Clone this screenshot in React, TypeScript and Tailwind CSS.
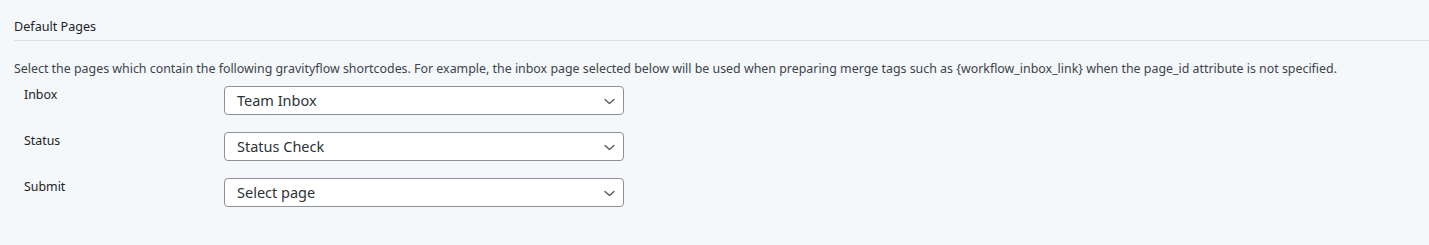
const ROWS = [
  { label: "Inbox", value: "Team Inbox" },
  { label: "Status", value: "Status Check" },
  { label: "Submit", value: "Select page" },
];

function PageSelect({ value }: { value: string }) {
  return (
    <div className="relative w-[400px] h-[29px] rounded-[4px] border border-[#8c8f94] bg-white flex items-center pl-[12px] text-[14.5px] text-[#2c3338] [font-family:'Noto_Sans',sans-serif]">
      <span>{value}</span>
      <svg
        className="absolute right-[8px] top-[11px] text-[#50575e]"
        width="11"
        height="7"
        viewBox="0 0 11 7"
        fill="none"
      >
        <path d="M1 1.5l4.5 4L10 1.5" stroke="currentColor" strokeWidth="1.3" strokeLinecap="round" strokeLinejoin="round" />
      </svg>
    </div>
  );
}

export default function App() {
  return (
    <div className="w-[1429px] h-[245px] bg-[#f4f8fb] text-[#3c434a] text-[12.4px] [font-family:'Noto_Sans',sans-serif] pt-[17px] pl-[14px]">
      <h3 className="text-[12.6px] leading-[20px] font-normal text-[#1d2327]">Default Pages</h3>
      <div className="mt-[3px] h-px bg-[#dcdfe3]" />
      <p className="mt-[18px] leading-[19px]">
        Select the pages which contain the following gravityflow shortcodes. For example, the inbox page selected below will be used when preparing merge tags such as {"{workflow_inbox_link}"} when the page_id attribute is not specified.
      </p>
      <div className="mt-[8px] flex flex-col gap-[17px]">
        {ROWS.map((r) => (
          <div key={r.label} className="flex items-start">
            <div className="w-[210px] pl-[10px] leading-[18px] text-[#1d2327]">{r.label}</div>
            <PageSelect value={r.value} />
          </div>
        ))}
      </div>
    </div>
  );
}
